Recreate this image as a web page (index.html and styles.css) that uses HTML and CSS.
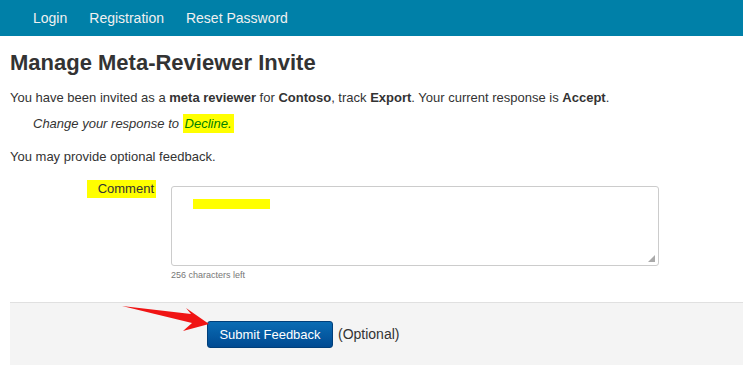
FILE: index.html
```html
<!DOCTYPE html>
<html>
<head>
<meta charset="utf-8">
<link rel="stylesheet" href="styles.css">
</head>
<body>
<nav class="navbar">
  <a class="nav-link" href="#">Login</a>
  <a class="nav-link" href="#">Registration</a>
  <a class="nav-link" href="#">Reset Password</a>
</nav>
<main class="content">
  <h1 class="title">Manage Meta-Reviewer Invite</h1>
  <p class="intro">You have been invited as a <b>meta reviewer</b> for <b>Contoso</b>, track <b>Export</b>. Your current response is <b>Accept</b>.</p>
  <p class="change">Change your response to <a class="decline" href="#">Decline.</a></p>
  <p class="optional">You may provide optional feedback.</p>
  <div class="form-row">
    <label class="comment-label">Comment</label>
    <div class="field">
      <div class="textarea"><span class="mark"></span><span class="grip"></span></div>
      <div class="hint">256 characters left</div>
    </div>
  </div>
  <div class="actions">
    <button class="btn">Submit Feedback</button>
    <span class="opt">(Optional)</span>
    <svg class="arrow" width="100" height="32" viewBox="0 0 100 32">
      <polygon points="0,3 69,11 64,5 87,21 61,28 70,20" fill="#f01414"/>
    </svg>
  </div>
</main>
</body>
</html>
```
FILE: styles.css
```css
body {
  margin: 0;
  font-family: "Liberation Sans", Arial, sans-serif;
  color: #333;
  background: #fff;
}
.navbar {
  height: 36px;
  background: #0080a8;
  display: flex;
  align-items: center;
  padding-left: 33px;
  gap: 0;
}
.nav-link {
  color: #f0f0f0;
  text-decoration: none;
  font-size: 14px;
  margin-right: 22px;
}
.content {
  padding-left: 10px;
}
.title {
  font-size: 22px;
  font-weight: bold;
  margin: 14px 0 0 0;
  line-height: 25px;
  color: #333;
}
.intro {
  font-size: 13px;
  margin: 14px 0 0 0;
  line-height: 18px;
}
.change {
  font-size: 13px;
  font-style: italic;
  margin: 8px 0 0 23px;
  line-height: 18px;
}
.decline {
  color: #008000;
  background: #ffff00;
  text-decoration: none;
  padding: 2px 2px 2px 2px;
}
.optional {
  font-size: 13px;
  margin: 15px 0 0 0;
  line-height: 18px;
}
.form-row {
  display: flex;
  margin-top: 14px;
}
.comment-label {
  width: 69px;
  margin-left: 77px;
  height: 18px;
  background: #ffff00;
  font-size: 13px;
  line-height: 18px;
  text-align: right;
  padding-right: 2px;
  box-sizing: border-box;
  color: #333;
}
.field {
  margin-left: 15px;
  margin-top: 6px;
}
.textarea {
  position: relative;
  width: 488px;
  height: 80px;
  box-sizing: border-box;
  border: 1px solid #ccc;
  border-radius: 3px;
  background: #fff;
}
.mark {
  display: block;
  width: 77px;
  height: 10px;
  background: #ffff00;
  margin: 12px 0 0 21px;
}
.grip {
  position: absolute;
  right: 3px;
  bottom: 3px;
  width: 7px;
  height: 7px;
  background:
    radial-gradient(circle, #aaa 50%, transparent 51%) 0 0 / 2px 2px;
  clip-path: polygon(100% 0, 100% 100%, 0 100%);
}
.hint {
  font-size: 9px;
  color: #777;
  margin-top: 4px;
}
.actions {
  position: relative;
  margin-top: 22px;
  background: #f4f4f4;
  border-top: 1px solid #e0e0e0;
  height: 62px;
  display: flex;
  align-items: center;
  padding-left: 197px;
}
.btn {
  width: 126px;
  height: 27px;
  font-family: "Liberation Sans", Arial, sans-serif;
  font-size: 13px;
  color: #fff;
  border: 1px solid #003f7a;
  border-radius: 3px;
  background: linear-gradient(#0a6cb4, #004a92);
  padding: 0;
}
.opt {
  margin-left: 5px;
  font-size: 14px;
  color: #333;
}
.arrow {
  position: absolute;
  left: 112px;
  top: 0;
}
```
